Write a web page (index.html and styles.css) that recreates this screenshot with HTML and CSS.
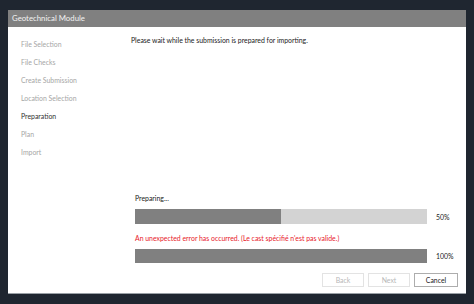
FILE: index.html
```html
<!DOCTYPE html>
<html>
<head>
<meta charset="utf-8">
<link rel="stylesheet" href="styles.css">
</head>
<body>
<div class="dialog">
  <div class="titlebar">Geotechnical Module</div>
  <div class="content">
    <nav class="sidebar">
      <div class="step">File Selection</div>
      <div class="step">File Checks</div>
      <div class="step">Create Submission</div>
      <div class="step">Location Selection</div>
      <div class="step active">Preparation</div>
      <div class="step">Plan</div>
      <div class="step">Import</div>
    </nav>
    <main class="main">
      <div class="intro">Please wait while the submission is prepared for importing.</div>
      <div class="spacer"></div>
      <div class="progress-area">
        <div class="label">Preparing...</div>
        <div class="bar-row first">
          <div class="bar"><div class="fill" style="width:50%"></div></div>
          <div class="pct">50%</div>
        </div>
        <div class="error">An unexpected error has occurred. (Le cast spécifié n'est pas valide.)</div>
        <div class="bar-row second">
          <div class="bar thin"><div class="fill" style="width:100%"></div></div>
          <div class="pct">100%</div>
        </div>
      </div>
      <div class="buttons">
        <button class="btn disabled">Back</button>
        <button class="btn disabled">Next</button>
        <button class="btn">Cancel</button>
      </div>
    </main>
  </div>
</div>
</body>
</html>
```
FILE: styles.css
```css
html, body {
  margin: 0;
  padding: 0;
  background: #1f2630;
  width: 474px;
  height: 304px;
  overflow: hidden;
  font-family: "Lato", "Open Sans", sans-serif;
}
body {
  padding: 10px 0 0 8px;
  box-sizing: border-box;
}
.dialog {
  width: 458px;
  height: 283px;
  background: #ffffff;
  display: flex;
  flex-direction: column;
  box-shadow: 0 1px 0 #9aa0a6;
}
.titlebar {
  height: 17px;
  background: #808080;
  color: #f2f2f2;
  font-size: 7.8px;
  line-height: 17px;
  padding-left: 4px;
  flex: none;
}
.content {
  flex: 1;
  display: flex;
}
.sidebar {
  width: 110px;
  padding: 10.5px 0 0 13px;
  flex: none;
}
.step {
  font-size: 6.9px;
  line-height: 12px;
  height: 18.15px;
  color: #a6a6a6;
}
.step.active {
  color: #333333;
}
.main {
  flex: 1;
  display: flex;
  flex-direction: column;
  padding: 0 8px 6px 0;
}
.intro {
  margin-top: 7px;
  font-size: 6.9px;
  line-height: 12px;
  color: #222;
}
.spacer {
  flex: 1;
}
.progress-area {
  padding-left: 4px;
}
.label {
  font-size: 6.9px;
  line-height: 12px;
  color: #222;
}
.bar-row {
  display: flex;
  align-items: center;
  gap: 9px;
}
.bar-row.first {
  margin-top: 5px;
}
.bar-row.second {
  margin-top: 5px;
}
.bar {
  width: 292px;
  height: 15px;
  background: #d3d3d3;
}
.bar.thin {
  height: 14px;
}
.fill {
  height: 100%;
  background: #808080;
}
.pct {
  font-size: 6.9px;
  color: #222;
}
.error {
  margin-top: 8px;
  font-size: 6.9px;
  line-height: 12px;
  color: #e8202a;
}
.buttons {
  margin-top: 10px;
  display: flex;
  justify-content: flex-end;
  gap: 4px;
}
.btn {
  width: 44px;
  height: 14px;
  padding: 0;
  background: #ffffff;
  border: 1px solid #adadad;
  font-family: inherit;
  font-size: 6.9px;
  color: #222;
  line-height: 12px;
}
.btn.disabled {
  width: 42px;
  border-color: #e3e3e3;
  color: #b8b8b8;
}
```
